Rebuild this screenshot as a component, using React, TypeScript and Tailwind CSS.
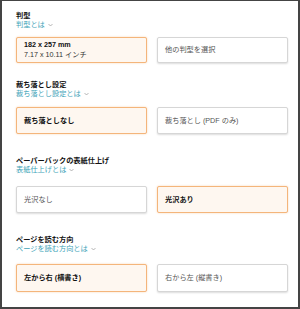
import React from "react";

type Option = {
  lines: string[];
  selected?: boolean;
};

type Section = {
  title: string;
  link: string;
  options: [Option, Option];
  sectionClass: string;
  rowClass: string;
  cardHeight: string;
};

const sections: Section[] = [
  {
    title: "判型",
    link: "判型とは",
    options: [
      { lines: ["182 x 257 mm", "7.17 x 10.11 インチ"], selected: true },
      { lines: ["他の判型を選択"] },
    ],
    sectionClass: "",
    rowClass: "mt-[8px]",
    cardHeight: "h-[26px]",
  },
  {
    title: "裁ち落とし設定",
    link: "裁ち落とし設定とは",
    options: [
      { lines: ["裁ち落としなし"], selected: true },
      { lines: ["裁ち落とし (PDF のみ)"] },
    ],
    sectionClass: "mt-[17px]",
    rowClass: "mt-[9px]",
    cardHeight: "h-[27px]",
  },
  {
    title: "ペーパーバックの表紙仕上げ",
    link: "表紙仕上げとは",
    options: [{ lines: ["光沢なし"] }, { lines: ["光沢あり"], selected: true }],
    sectionClass: "mt-[22px]",
    rowClass: "mt-[12px]",
    cardHeight: "h-[27px]",
  },
  {
    title: "ページを読む方向",
    link: "ページを読む方向とは",
    options: [
      { lines: ["左から右 (横書き)"], selected: true },
      { lines: ["右から左 (縦書き)"] },
    ],
    sectionClass: "mt-[22px]",
    rowClass: "mt-[11px]",
    cardHeight: "h-[28px]",
  },
];

function Chevron() {
  return (
    <svg width="5" height="4" viewBox="0 0 10 6" fill="none" stroke="#999" strokeWidth="1.4" className="ml-[3px] mt-[1px]">
      <path d="M1 1l4 4 4-4" />
    </svg>
  );
}

function OptionCard({ option, height }: { option: Option; height: string }) {
  const base = "flex flex-1 flex-col justify-center rounded-[2px] px-[7px]";
  const look = option.selected
    ? "border-[1.5px] border-[#f4b57b] bg-[#fef7f0] shadow-[0_0_2px_rgba(240,150,70,0.45)]"
    : "border border-[#d6d6d6] bg-white shadow-[0_1px_2px_rgba(0,0,0,0.14)]";
  return (
    <div className={`${base} ${look} ${height}`}>
      {option.lines.map((line, i) => (
        <div
          key={line}
          className={
            i === 0
              ? `text-[7.2px] leading-[10px] ${option.selected ? "font-bold text-[#111]" : "text-[#555]"}`
              : "text-[7.2px] leading-[10px] text-[#333]"
          }
        >
          {line}
        </div>
      ))}
    </div>
  );
}

export default function App() {
  return (
    <div
      className="h-[309px] w-[300px] border-b-2 border-l-2 border-r-2 border-t border-[#444] bg-white pl-[14px] pr-[10px] pt-[10px]"
      style={{ fontFamily: '"Liberation Sans", "Noto Sans CJK JP", sans-serif' }}
    >
      {sections.map((s) => (
        <div key={s.title} className={s.sectionClass}>
          <div className="text-[7.2px] font-bold leading-[9px] text-[#111]">{s.title}</div>
          <div className="flex items-center text-[7.2px] leading-[9px] text-[#40a3b7]">
            {s.link}
            <Chevron />
          </div>
          <div className={`flex gap-[10px] ${s.rowClass}`}>
            <OptionCard option={s.options[0]} height={s.cardHeight} />
            <OptionCard option={s.options[1]} height={s.cardHeight} />
          </div>
        </div>
      ))}
    </div>
  );
}
